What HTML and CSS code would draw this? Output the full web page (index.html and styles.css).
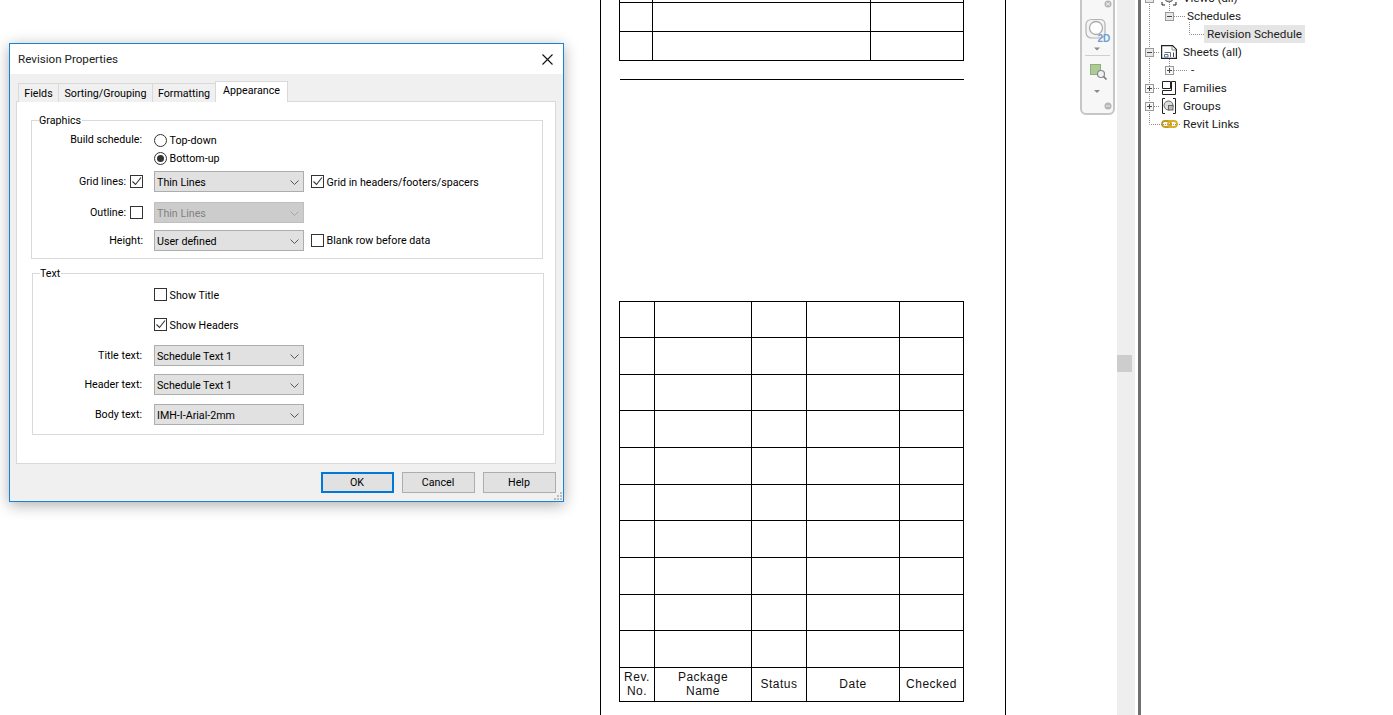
FILE: index.html
```html
<!DOCTYPE html>
<html lang="en">
<head>
<meta charset="utf-8">
<title>Revision Properties</title>
<link rel="stylesheet" href="styles.css">
</head>
<body>
<div class="stage">
  <main class="viewport">
    <div class="sheet">
      <div class="rev-top">
        <i></i><i></i><i></i>
        <i></i><i></i><i></i>
        <i></i><i></i><i></i>
      </div>
      <div class="rule"></div>
      <div class="rev-table">
        <i></i><i></i><i></i><i></i><i></i>
        <i></i><i></i><i></i><i></i><i></i>
        <i></i><i></i><i></i><i></i><i></i>
        <i></i><i></i><i></i><i></i><i></i>
        <i></i><i></i><i></i><i></i><i></i>
        <i></i><i></i><i></i><i></i><i></i>
        <i></i><i></i><i></i><i></i><i></i>
        <i></i><i></i><i></i><i></i><i></i>
        <i></i><i></i><i></i><i></i><i></i>
        <i></i><i></i><i></i><i></i><i></i>
        <span>Rev.<br>No.</span><span>Package<br>Name</span><span>Status</span><span>Date</span><span>Checked</span>
      </div>
    </div>

    <svg class="navbar" width="36" height="118" viewBox="0 0 36 118">
      <rect x="1" y="-12" width="33" height="126" rx="5" fill="#f7f7f7" stroke="#c6c6c6" stroke-width="2"/>
      <circle cx="28" cy="4" r="3.5" fill="#b5b5b5"/>
      <path d="M26 2.500l4 3M30 2.500l-4 3" stroke="#f2f2f2"/>
      <path d="M12 19.500h8q5 0 5 5v8q0 5.500-5 5.500h-8q-6 0-6-6v-7q0-5.500 6-5.500z" fill="#f4f4f4" stroke="#b4b4b4" stroke-width="1.200"/>
      <circle cx="16" cy="28" r="6.500" fill="#fff" stroke="#aaa" stroke-width="1.300"/>
      <text x="17.500" y="41.500" class="nav2d">2D</text>
      <path d="M14 47.500h6l-3 3z" fill="#8a8a8a"/>
      <path d="M5 55.500h25" stroke="#cfcfcf"/>
      <rect x="10.500" y="64.500" width="10" height="10" fill="#aecb96" stroke="#8fb07a"/>
      <circle cx="21" cy="74" r="3.500" fill="#eef2f4" stroke="#888" stroke-width="1.200"/>
      <path d="M23.500 76.500l3 3" stroke="#777" stroke-width="1.600"/>
      <path d="M14 90h6l-3 3z" fill="#8a8a8a"/>
      <circle cx="28" cy="106" r="3.500" fill="#b5b5b5"/>
      <path d="M26 106h4" stroke="#f2f2f2"/>
    </svg>
  </main>

  <div class="scrollbar"><div class="thumb"></div></div>

  <aside class="browser">
    <svg class="guides" width="252" height="130" viewBox="1141 0 252 130">
      <path d="M1149.500 0V124.500H1180M1154 52.500H1160M1154 88.500H1160M1154 106.500H1160M1169.500 0V12M1169.500 57V66M1174 70.500H1187M1174 16.500H1185M1189.500 22V34.500H1204" fill="none" stroke="#8c8c8c" stroke-dasharray="1 1"/>
    </svg>
    <ul class="tree">
      <li class="node l0"><b class="box minus"></b>
        <svg class="ico" width="16" height="16" viewBox="0 0 16 16"><path d="M1 4V1h3M12 1h3v3M1 12v3h3M12 15h3v-3" fill="none" stroke="#222"/><circle cx="8" cy="8" r="4" fill="#ccc" stroke="#666"/></svg>
        <span class="txt views">Views (all)</span></li>
      <li class="node l1"><b class="box minus"></b><span class="txt gap13">Schedules</span></li>
      <li class="node l2"><span class="sel">Revision Schedule</span></li>
      <li class="node l0"><b class="box minus"></b>
        <svg class="ico" width="16" height="16" viewBox="0 0 16 16"><path d="M.6 1.600h11l3.800 3.800v9H.6z" fill="#fff" stroke="#222" stroke-width="1.200"/><path d="M11 2v4h4" fill="none" stroke="#888"/><path d="M3.500 8.500h6v4.500M3.500 10.500h3.500V13H3.500z" fill="none" stroke="#5f6f8c"/><path d="M12.500 8.500V13" stroke="#444"/></svg>
        <span class="txt">Sheets (all)</span></li>
      <li class="node l1"><b class="box plus"></b><span class="txt gap18">-</span></li>
      <li class="node l0"><b class="box plus"></b>
        <svg class="ico" width="16" height="16" viewBox="0 0 16 16"><path d="M1.500 10.500v4h13V1.500h-4v9z" fill="#fff" stroke="#222"/><path d="M1.500 1.500h8v7h-8z" fill="#fff" stroke="#222"/></svg>
        <span class="txt">Families</span></li>
      <li class="node l0"><b class="box plus"></b>
        <svg class="ico" width="16" height="16" viewBox="0 0 16 16"><path d="M4 .5H1.500v15H4M12 .5h2.500v15H12" fill="none" stroke="#222"/><circle cx="7.500" cy="7.500" r="4.500" fill="#ddd" stroke="#666"/><rect x="7.500" y="7.500" width="4.500" height="4.500" fill="#bbb" stroke="#666"/></svg>
        <span class="txt">Groups</span></li>
      <li class="node l0b">
        <svg class="ico" width="17" height="16" viewBox="0 0 17 16"><rect x="1" y="5" width="9" height="6" rx="3" fill="none" stroke="#c79a1c" stroke-width="1.800"/><rect x="7" y="5" width="9" height="6" rx="3" fill="none" stroke="#dcae22" stroke-width="1.800"/></svg>
        <span class="txt links">Revit Links</span></li>
    </ul>
  </aside>

  <section class="dialog">
    <header class="titlebar">
      <span>Revision Properties</span>
      <svg class="close" width="11" height="11" viewBox="0 0 11 11"><path d="M.5.500l10 10M10.500.500l-10 10" stroke="#111" stroke-width="1.100"/></svg>
    </header>
    <div class="dlg-body">
      <nav class="tabs">
        <span class="tab t1">Fields</span>
        <span class="tab t2">Sorting/Grouping</span>
        <span class="tab t3">Formatting</span>
        <span class="tab active">Appearance</span>
      </nav>
      <div class="panel">
        <div class="group g1">
          <span class="legend">Graphics</span>
          <div class="row short">
            <div class="lab up">Build schedule:</div>
            <span class="radio"></span><span class="opt">Top-down</span>
          </div>
          <div class="row short">
            <div class="lab"></div>
            <span class="radio on"></span><span class="opt">Bottom-up</span>
          </div>
          <div class="row m4">
            <div class="lab">Grid lines:<span class="check on lab-check"><svg width="11" height="11" viewBox="0 0 11 11"><path d="M1.500 5.500l3 3 5.500-7" fill="none" stroke="#333" stroke-width="1.100"/></svg></span></div>
            <div class="select">Thin Lines<svg class="chev" width="9" height="5" viewBox="0 0 9 5"><path d="M.5 .5l4 4 4-4" fill="none" stroke="#555"/></svg></div>
            <span class="check side"><svg width="11" height="11" viewBox="0 0 11 11"><path d="M1.500 5.500l3 3 5.500-7" fill="none" stroke="#333" stroke-width="1.100"/></svg></span><span class="opt low">Grid in headers/footers/spacers</span>
          </div>
          <div class="row m10">
            <div class="lab">Outline:<span class="check lab-check"></span></div>
            <div class="select disabled">Thin Lines<svg class="chev" width="9" height="5" viewBox="0 0 9 5"><path d="M.5 .5l4 4 4-4" fill="none" stroke="#a6a6a6"/></svg></div>
          </div>
          <div class="row m7">
            <div class="lab">Height:</div>
            <div class="select">User defined<svg class="chev" width="9" height="5" viewBox="0 0 9 5"><path d="M.5 .5l4 4 4-4" fill="none" stroke="#555"/></svg></div>
            <span class="check side"></span><span class="opt">Blank row before data</span>
          </div>
        </div>
        <div class="group g2">
          <span class="legend">Text</span>
          <div class="row">
            <div class="lab"></div>
            <span class="check"></span><span class="opt low">Show Title</span>
          </div>
          <div class="row m9">
            <div class="lab"></div>
            <span class="check"><svg width="11" height="11" viewBox="0 0 11 11"><path d="M1.500 5.500l3 3 5.500-7" fill="none" stroke="#333" stroke-width="1.100"/></svg></span><span class="opt low">Show Headers</span>
          </div>
          <div class="row m10">
            <div class="lab">Title text:</div>
            <div class="select">Schedule Text 1<svg class="chev" width="9" height="5" viewBox="0 0 9 5"><path d="M.5 .5l4 4 4-4" fill="none" stroke="#555"/></svg></div>
          </div>
          <div class="row m8">
            <div class="lab">Header text:</div>
            <div class="select">Schedule Text 1<svg class="chev" width="9" height="5" viewBox="0 0 9 5"><path d="M.5 .5l4 4 4-4" fill="none" stroke="#555"/></svg></div>
          </div>
          <div class="row m9">
            <div class="lab">Body text:</div>
            <div class="select">IMH-I-Arial-2mm<svg class="chev" width="9" height="5" viewBox="0 0 9 5"><path d="M.5 .5l4 4 4-4" fill="none" stroke="#555"/></svg></div>
          </div>
        </div>
      </div>
      <footer class="actions">
        <button class="btn default">OK</button>
        <button class="btn">Cancel</button>
        <button class="btn">Help</button>
      </footer>
      <svg class="grip" width="10" height="10" viewBox="0 0 10 10"><path d="M7 1h2v2H7zM4 4h2v2H4zM7 4h2v2H7zM1 7h2v2H1zM4 7h2v2H4zM7 7h2v2H7z" fill="#bdbdbd"/></svg>
    </div>
  </section>
</div>
</body>
</html>
```
FILE: styles.css
```css
* { box-sizing: border-box; }
html, body { margin: 0; padding: 0; background: #fff; }
body { font-family: Roboto, "Noto Sans", sans-serif; font-size: 10.7px; color: #000; }

.stage { position: relative; width: 1393px; height: 715px; overflow: hidden; display: flex; background: #fff; }

/* drawing canvas */
.viewport { position: relative; width: 1117px; height: 715px; flex: none; }
.sheet { display: flow-root; width: 406px; height: 715px; margin-left: 600px; border-left: 1px solid #000; border-right: 1px solid #000; padding-left: 18px; }
.rev-top { display: grid; width: 345px; margin-top: -26px; grid-template-columns: 33px 218px 93px; grid-auto-rows: 29px; border-left: 1px solid #000; }
.rev-top i { border-right: 1px solid #000; border-bottom: 1px solid #000; }
.rule { width: 344px; height: 1px; margin: 18px 0 0 1px; background: #000; }
.rev-table { display: grid; width: 345px; margin-top: 221px; grid-template-columns: 35px 97px 55px 93px 64px; grid-template-rows: 36px 37px 36px 37px 37px 36px 37px 37px 36px 37px 34px; border-left: 1px solid #000; border-top: 1px solid #000; }
.rev-table i, .rev-table span { border-right: 1px solid #000; border-bottom: 1px solid #000; }
.rev-table span { display: flex; align-items: center; justify-content: center; text-align: center; padding-bottom: 2px; font-family: "Liberation Sans", Arial, sans-serif; font-size: 12px; line-height: 14px; letter-spacing: .5px; color: #111; }

.navbar { position: absolute; left: 1080px; top: 0; }
.nav2d { font-family: "Liberation Sans", Arial, sans-serif; font-size: 10px; font-weight: 700; fill: #6d9fd0; }

.scrollbar { position: relative; width: 18px; height: 715px; flex: none; background: #eeeeee; }
.thumb { position: absolute; left: 0; top: 355px; width: 15px; height: 17px; background: #cdcdcd; }

/* project browser */
.browser { position: relative; flex: 1; margin-left: 3px; border-left: 3px solid #6f6f6f; background: #fff; }
.guides { position: absolute; left: 0; top: 0; }
.tree { position: relative; list-style: none; margin: -11px 0 0; padding: 0; font-size: 11.75px; color: #222; }
.node { display: flex; align-items: center; height: 18px; white-space: nowrap; }
.l0 { padding-left: 4px; }
.l0b { padding-left: 20px; }
.l1 { padding-left: 24px; }
.l2 { padding-left: 63px; }
.box { position: relative; width: 9px; height: 9px; flex: none; border: 1px solid #9a9a9a; background: #e8e8e8; }
.box::before { content: ""; position: absolute; left: 1px; top: 3px; width: 5px; height: 1px; background: #445; }
.box.plus { background: #f6f6f6; }
.box.plus::after { content: ""; position: absolute; left: 3px; top: 1px; width: 1px; height: 5px; background: #445; }
.ico { flex: none; margin-left: 7px; margin-right: 6px; }
.l0b .ico { margin-left: 0; margin-right: 5px; }
.gap13 { margin-left: 13px; }
.gap18 { margin-left: 17px; }
.sel { width: 101px; height: 18px; line-height: 18px; padding-left: 3px; background: #e5e5e5; }

/* dialog */
.dialog { position: absolute; left: 9px; top: 43px; width: 555px; height: 459px; border: 1px solid #1683d8; background: #f0f0f0; box-shadow: 0 3px 14px rgba(0, 0, 0, .32); display: flex; flex-direction: column; }
.titlebar { height: 30px; flex: none; background: #fff; display: flex; align-items: center; justify-content: space-between; padding: 0 10px 0 8px; font-size: 11.65px; color: #222; }
.dlg-body { position: relative; flex: 1; }
.tabs { display: flex; align-items: flex-end; height: 21px; margin: 7px 0 -1px 8px; position: relative; z-index: 1; }
.tab { height: 19px; line-height: 19px; text-align: center; border: 1px solid #d9d9d9; border-bottom: 0; margin-right: -1px; background: #f0f0f0; }
.t1 { width: 41px; }
.t2 { width: 95px; }
.t3 { width: 64px; }
.tab.active { width: 73px; height: 21px; line-height: 18px; background: #fff; }
.panel { width: 540px; height: 363px; margin-left: 6px; background: #fff; border: 1px solid #d9d9d9; }
.group { position: relative; border: 1px solid #d9d9d9; }
.g1 { width: 512px; height: 139px; margin: 18px 0 0 14px; padding-top: 10px; }
.g2 { width: 512px; height: 162px; margin: 14px 0 0 15px; padding-top: 10px; }
.legend { position: absolute; left: 7px; top: -6px; padding: 0 1px 0 0; line-height: 12px; height: 12px; background: #fff; }
.row { display: flex; align-items: center; height: 21px; }
.row.short { height: 18px; }
.m4 { margin-top: 4px; }
.m7 { margin-top: 7px; }
.m8 { margin-top: 8px; }
.m9 { margin-top: 9px; }
.m10 { margin-top: 10px; }
.lab { width: 111px; flex: none; margin-right: 11px; display: flex; justify-content: flex-end; align-items: center; }
.lab.up { position: relative; top: -1px; width: 110px; margin-right: 12px; }
.g2 .lab { width: 109px; margin-right: 12px; }
.radio { width: 13px; height: 13px; flex: none; border: 1px solid #333; border-radius: 50%; background: #fff; position: relative; }
.radio.on::after { content: ""; position: absolute; left: 2px; top: 2px; width: 7px; height: 7px; border-radius: 50%; background: #333; }
.check { width: 13px; height: 13px; flex: none; border: 1px solid #333; background: #fff; display: flex; align-items: center; justify-content: center; }
.lab-check { margin-left: 4px; }
.side { margin-left: 7px; }
.opt { margin-left: 2.6px; white-space: nowrap; }
.opt.low { padding-top: 2px; }
.select { position: relative; width: 150px; height: 21px; flex: none; line-height: 21px; padding-left: 2px; background: #e1e1e1; border: 1px solid #adadad; }
.select.disabled { background: #ccc; border-color: #bfbfbf; color: #838383; }
.chev { position: absolute; right: 4px; top: 8px; }
.actions { display: flex; justify-content: flex-end; gap: 8px; padding-right: 7px; margin-top: 8px; }
.btn { width: 73px; height: 21px; padding: 0 1px 0 0; font: inherit; color: #000; background: #e1e1e1; border: 1px solid #adadad; }
.btn.default { border: 2px solid #0078d7; }
.grip { position: absolute; right: 0; bottom: 0; }
```
